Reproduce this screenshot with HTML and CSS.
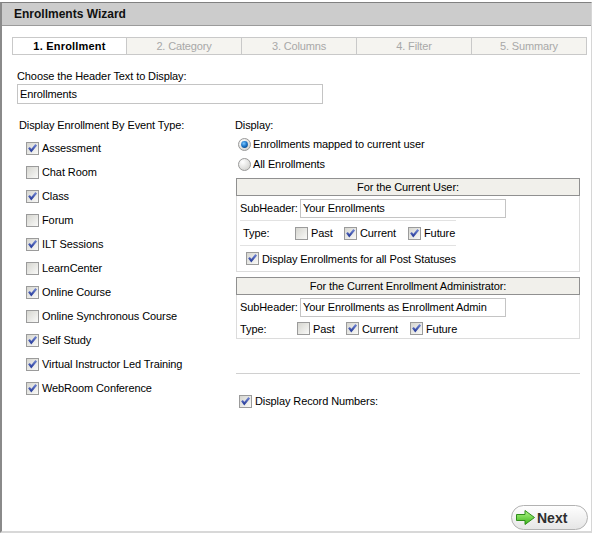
FILE: index.html
```html
<!DOCTYPE html>
<html lang="en">
<head>
<meta charset="utf-8">
<title>Enrollments Wizard</title>
<link rel="stylesheet" href="styles.css">
</head>
<body>
<svg class="defs" width="0" height="0" aria-hidden="true">
  <defs>
    <linearGradient id="boxg" x1="0" y1="0" x2="1" y2="1">
      <stop offset="0" stop-color="#d4d4ce"/>
      <stop offset="1" stop-color="#fbfbfa"/>
    </linearGradient>
    <linearGradient id="chkg" x1="0" y1="0" x2="0" y2="1">
      <stop offset="0" stop-color="#6d82d0"/>
      <stop offset="1" stop-color="#2f43a0"/>
    </linearGradient>
    <radialGradient id="rdg" cx="0.35" cy="0.3" r="0.8">
      <stop offset="0" stop-color="#ffffff"/>
      <stop offset="1" stop-color="#cfcfcc"/>
    </radialGradient>
    <radialGradient id="dotg" cx="0.4" cy="0.35" r="0.7">
      <stop offset="0" stop-color="#7cc8ff"/>
      <stop offset="0.6" stop-color="#1b74c8"/>
      <stop offset="1" stop-color="#0b4a8c"/>
    </radialGradient>
    <linearGradient id="arrg" x1="0" y1="0" x2="0" y2="1">
      <stop offset="0" stop-color="#b4f889"/>
      <stop offset="1" stop-color="#39b418"/>
    </linearGradient>
    <symbol id="cb-off" viewBox="0 0 13 13">
      <rect x="0.5" y="0.5" width="12" height="12" fill="url(#boxg)" stroke="#9b9b9b"/>
    </symbol>
    <symbol id="cb-on" viewBox="0 0 13 13">
      <rect x="0.5" y="0.5" width="12" height="12" fill="url(#boxg)" stroke="#9b9b9b"/>
      <path d="M3 5.6 L5.3 8.7 L10.2 2.8" fill="none" stroke="url(#chkg)" stroke-width="2.2"/>
    </symbol>
    <symbol id="rd-off" viewBox="0 0 13 13">
      <circle cx="6.5" cy="6.5" r="6" fill="url(#rdg)" stroke="#9a9a9a"/>
    </symbol>
    <symbol id="rd-on" viewBox="0 0 13 13">
      <circle cx="6.5" cy="6.5" r="6" fill="url(#rdg)" stroke="#9a9a9a"/>
      <circle cx="6.5" cy="6.5" r="3.4" fill="url(#dotg)"/>
    </symbol>
  </defs>
</svg>

<div class="panel">
  <div class="title">Enrollments Wizard</div>

  <div class="tabs">
    <div class="tab active">1. Enrollment</div>
    <div class="tab">2. Category</div>
    <div class="tab">3. Columns</div>
    <div class="tab">4. Filter</div>
    <div class="tab">5. Summary</div>
  </div>

  <div class="form">
    <div class="prompt">Choose the Header Text to Display:</div>
    <input class="header-input" type="text" value="Enrollments">

    <div class="cols">
      <div class="left">
        <div class="heading">Display Enrollment By Event Type:</div>
        <ul class="types">
          <li><svg class="cb"><use href="#cb-on"/></svg><span>Assessment</span></li>
          <li><svg class="cb"><use href="#cb-off"/></svg><span>Chat Room</span></li>
          <li><svg class="cb"><use href="#cb-on"/></svg><span>Class</span></li>
          <li><svg class="cb"><use href="#cb-off"/></svg><span>Forum</span></li>
          <li><svg class="cb"><use href="#cb-on"/></svg><span>ILT Sessions</span></li>
          <li><svg class="cb"><use href="#cb-off"/></svg><span>LearnCenter</span></li>
          <li><svg class="cb"><use href="#cb-on"/></svg><span>Online Course</span></li>
          <li><svg class="cb"><use href="#cb-off"/></svg><span>Online Synchronous Course</span></li>
          <li><svg class="cb"><use href="#cb-on"/></svg><span>Self Study</span></li>
          <li><svg class="cb"><use href="#cb-on"/></svg><span>Virtual Instructor Led Training</span></li>
          <li><svg class="cb"><use href="#cb-on"/></svg><span>WebRoom Conference</span></li>
        </ul>
      </div>

      <div class="right">
        <div class="heading">Display:</div>
        <div class="radios">
          <div class="radio"><svg class="rd"><use href="#rd-on"/></svg><span>Enrollments mapped to current user</span></div>
          <div class="radio"><svg class="rd"><use href="#rd-off"/></svg><span>All Enrollments</span></div>
        </div>

        <div class="box">
          <div class="box-head">For the Current User:</div>
          <div class="box-body">
            <div class="sub">
              <span class="sub-label">SubHeader:</span>
              <input class="sub-input" type="text" value="Your Enrollments">
            </div>
            <div class="typetable">
              <div class="typerow">
                <span class="type-label">Type:</span>
                <span class="opt past"><svg class="cb"><use href="#cb-off"/></svg>Past</span>
                <span class="opt current"><svg class="cb"><use href="#cb-on"/></svg>Current</span>
                <span class="opt"><svg class="cb"><use href="#cb-on"/></svg>Future</span>
              </div>
            </div>
            <div class="post">
              <span class="opt"><svg class="cb"><use href="#cb-on"/></svg>Display Enrollments for all Post Statuses</span>
            </div>
          </div>
        </div>

        <div class="box second">
          <div class="box-head">For the Current Enrollment Administrator:</div>
          <div class="box-body">
            <div class="sub">
              <span class="sub-label">SubHeader:</span>
              <input class="sub-input" type="text" value="Your Enrollments as Enrollment Admin">
            </div>
            <div class="typerow short">
              <span class="type-label plain">Type:</span>
              <span class="opt past"><svg class="cb"><use href="#cb-off"/></svg>Past</span>
              <span class="opt current"><svg class="cb"><use href="#cb-on"/></svg>Current</span>
              <span class="opt"><svg class="cb"><use href="#cb-on"/></svg>Future</span>
            </div>
          </div>
        </div>

        <div class="rule"></div>

        <div class="record">
          <svg class="cb"><use href="#cb-on"/></svg><span>Display Record Numbers:</span>
        </div>
      </div>
    </div>
  </div>

  <div class="footer">
    <button class="next" type="button">
      <svg class="arrow" width="21" height="17" viewBox="0 0 21 17">
        <path d="M1.5 5.5 H10 V1.5 L19.5 8.5 L10 15.5 V11.5 H1.5 Z" fill="url(#arrg)" stroke="#2f8d1b" stroke-width="1" stroke-linejoin="round"/>
      </svg>
      <span>Next</span>
    </button>
  </div>
</div>
</body>
</html>
```

FILE: styles.css
```css
html, body {
  margin: 0;
  padding: 0;
  background: #ffffff;
}

body {
  font-family: "Liberation Sans", Arial, sans-serif;
  font-size: 11px;
  letter-spacing: -0.1px;
  color: #000000;
}

.defs {
  display: block;
  width: 0;
  height: 0;
  overflow: hidden;
}

.panel {
  margin-top: 2px;
  width: 589px;
  height: 528px;
  border-top: 1px solid #808080;
  border-left: 2px solid #8a8a8a;
  border-right: 1px solid #d6d6d6;
  border-bottom: 2px solid #d8d8d8;
  display: flex;
  flex-direction: column;
}

.title {
  height: 22px;
  line-height: 23px;
  padding-left: 12px;
  background: #cccccc;
  border-bottom: 1px solid #9b9b9b;
  font-weight: bold;
  font-size: 12px;
  letter-spacing: 0;
  color: #111111;
}

.tabs {
  margin: 11px 0 0 10px;
  width: max-content;
  display: grid;
  grid-template-columns: 113px repeat(4, 114px);
  gap: 1px;
  padding: 1px;
  background: #c9c9c9;
}

.tab {
  height: 16px;
  line-height: 16px;
  text-align: center;
  background: #f5f4f0;
  color: #a8a8a8;
  letter-spacing: -0.15px;
}

.tab.active {
  background: #ffffff;
  color: #000000;
  font-weight: bold;
  letter-spacing: 0.2px;
}

.form {
  padding-left: 15px;
}

.prompt {
  margin-top: 15px;
  line-height: 13px;
}

.header-input,
.sub-input {
  display: block;
  box-sizing: border-box;
  margin: 0;
  border: 1px solid #c4c4c4;
  padding: 0 2px;
  font: inherit;
  letter-spacing: inherit;
  color: #000000;
  background: #ffffff;
  outline: none;
}

.header-input {
  margin-top: 1px;
  width: 306px;
  height: 20px;
}

.cols {
  display: grid;
  grid-template-columns: 217px 346px;
  margin-top: 14px;
}

.heading {
  line-height: 14px;
}

.left .heading {
  padding-left: 2px;
}

.types {
  list-style: none;
  margin: 4px 0 0;
  padding: 0 0 0 9px;
}

.types li {
  display: flex;
  align-items: center;
  gap: 3px;
  height: 24px;
}

.cb,
.rd {
  width: 13px;
  height: 13px;
  flex: none;
  display: block;
}

.right .heading {
  padding-left: 1px;
}

.radios {
  margin-top: 2px;
  padding-left: 4px;
}

.radio {
  display: flex;
  align-items: center;
  gap: 2px;
  height: 20px;
}

.box {
  margin: 4px 0 0 2px;
  width: 344px;
}

.box.second {
  margin-top: 5px;
}

.box-head {
  height: 16px;
  line-height: 16px;
  border: 1px solid #909090;
  background: #f1f0eb;
  text-align: center;
}

.box-body {
  border: 1px solid #dcdcdc;
  border-top: 0;
  padding-left: 3px;
}

.sub {
  display: flex;
  align-items: center;
  height: 24px;
}

.sub-label {
  width: 60px;
  flex: none;
}

.sub-input {
  width: 206px;
  height: 19px;
}

.typetable {
  width: 216px;
  border-top: 1px solid #e2e2e2;
  border-bottom: 1px solid #e2e2e2;
}

.typerow {
  display: flex;
  align-items: center;
  height: 24px;
}

.typerow.short {
  height: 19px;
}

.type-label {
  width: 55px;
  padding-left: 3px;
  box-sizing: border-box;
  flex: none;
}

.type-label.plain {
  width: 57px;
  padding-left: 0;
}

.opt {
  display: flex;
  align-items: center;
  gap: 3px;
  flex: none;
}

.opt.past {
  width: 49px;
}

.opt.current {
  width: 64px;
}

.post {
  height: 25px;
  display: flex;
  align-items: center;
  padding-left: 6px;
}

.rule {
  margin: 34px 0 0 2px;
  width: 344px;
  height: 0;
  border-top: 1px solid #d0d0d0;
}

.record {
  margin-top: 17px;
  padding-left: 5px;
  height: 20px;
  display: flex;
  align-items: center;
  gap: 3px;
}

.footer {
  margin-top: auto;
  display: flex;
  justify-content: flex-end;
  padding: 0 3px 1px 0;
}

.next {
  box-sizing: border-box;
  width: 77px;
  height: 25px;
  margin: 0;
  padding: 0 0 0 3px;
  border: 1px solid #b2b2b2;
  border-radius: 13px;
  background: linear-gradient(#fefefe, #e6e6e6);
  display: flex;
  align-items: center;
  gap: 1px;
  font-family: "Liberation Sans", Arial, sans-serif;
  font-weight: bold;
  font-size: 14px;
  letter-spacing: 0;
  color: #2e2e2e;
  cursor: pointer;
}

.arrow {
  display: block;
  flex: none;
}
```
